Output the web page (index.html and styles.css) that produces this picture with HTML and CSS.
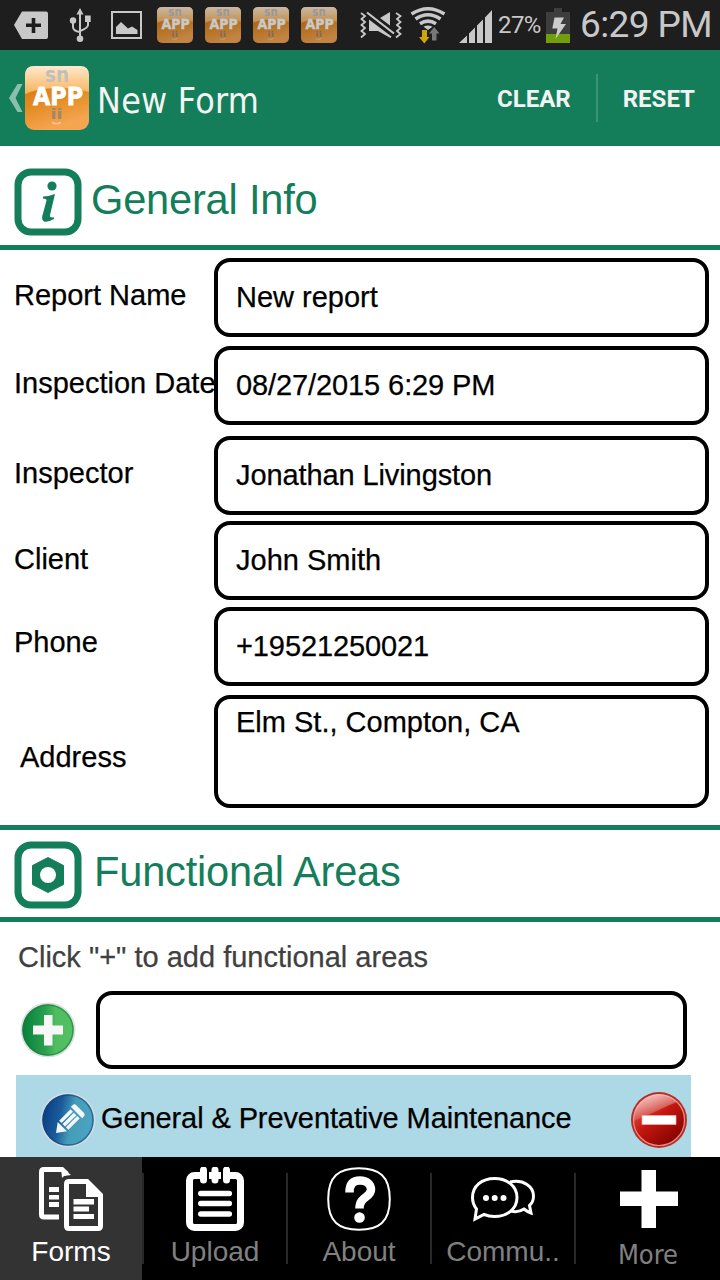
FILE: index.html
```html
<!DOCTYPE html>
<html lang="en">
<head>
<meta charset="utf-8">
<title>New Form</title>
<link rel="stylesheet" href="styles.css">
</head>
<body>
<svg class="defs" width="0" height="0">
  <defs>
    <linearGradient id="orange" x1="0" y1="0" x2="0.3" y2="1">
      <stop offset="0" stop-color="#f3ac4c"/><stop offset="0.42" stop-color="#dc8218"/><stop offset="0.6" stop-color="#e38b20"/><stop offset="1" stop-color="#f5a450"/>
    </linearGradient>
    <linearGradient id="gloss" x1="0" y1="0" x2="0" y2="1">
      <stop offset="0" stop-color="#ffe9cf"/><stop offset="1" stop-color="#f8b257"/>
    </linearGradient>
    <linearGradient id="green" x1="0" y1="0" x2="1" y2="0">
      <stop offset="0" stop-color="#067f3c"/><stop offset="0.45" stop-color="#2ba04e"/><stop offset="0.65" stop-color="#4fbd60"/><stop offset="1" stop-color="#55c064"/>
    </linearGradient>
    <linearGradient id="blue" x1="0" y1="0" x2="1" y2="0.2">
      <stop offset="0" stop-color="#04377c"/><stop offset="0.4" stop-color="#1b5b9c"/><stop offset="0.65" stop-color="#449cb8"/><stop offset="1" stop-color="#4aa3c0"/>
    </linearGradient>
    <linearGradient id="red" x1="0" y1="0" x2="0.8" y2="1">
      <stop offset="0.1" stop-color="#e25a50"/><stop offset="0.5" stop-color="#c4170f"/><stop offset="0.9" stop-color="#8d0500"/>
    </linearGradient>
    <linearGradient id="shine" x1="0.1" y1="0" x2="0.5" y2="1">
      <stop offset="0" stop-color="#fff" stop-opacity="0.7"/><stop offset="1" stop-color="#fff" stop-opacity="0.02"/>
    </linearGradient>
    <symbol id="snapp" viewBox="0 0 64 64">
      <rect width="64" height="64" rx="9" fill="url(#orange)"/>
      <path d="M0 28V9Q0 0 9 0H55Q64 0 64 9V26Q52 22 32 22T0 28Z" fill="url(#gloss)"/>
      <g font-family="DejaVu Sans" font-weight="bold">
        <text x="20" y="16" font-size="21" textLength="24" lengthAdjust="spacingAndGlyphs" fill="#c2bfbb">sn</text>
        <text x="8" y="38.500" font-size="25" textLength="50" lengthAdjust="spacingAndGlyphs" fill="#fff" stroke="#fff" stroke-width=".8">APP</text>
        <text x="25.500" y="53" font-size="14" textLength="12" lengthAdjust="spacingAndGlyphs" fill="#9b8873">ii</text>
      </g>
      <path d="M27 56.500Q31.500 59 36 56.500" fill="none" stroke="#ffc590" stroke-width="1.500"/>
    </symbol>
  </defs>
</svg>
<div class="screen">
  <div class="status">
    <div class="status-left">
      <svg width="36" height="50" viewBox="13 0 36 50"><path d="M14 25 22 11.500H46Q48 11.500 48 13.500V37Q48 39 46 39H22Z" fill="#c8c8c8"/><path d="M33.500 18V33M26 25.300H41" stroke="#1e1e1e" stroke-width="3.600"/></svg>
      <svg width="24" height="50" viewBox="67 0 24 50"><g fill="none" stroke="#c8c8c8" stroke-width="2"><path d="M79 13V38M79 32Q72 31 72 27V21M79 31Q87 28 87 25V18"/></g><path d="M79 8 82.500 14.500H75.500ZM84 15.500H89.700V22H84Z" fill="#c8c8c8"/><circle cx="72" cy="20.500" r="3.200" fill="#c8c8c8"/><circle cx="79" cy="38.700" r="3.300" fill="#c8c8c8"/></svg>
      <svg width="32" height="50" viewBox="111 0 32 50"><path d="M112 12H141V38H112Z" fill="none" stroke="#c8c8c8" stroke-width="2"/><path d="M116 34V27L121 22 128 28.500 132 26.500 137.500 30V34Z" fill="#c8c8c8"/></svg>
      <div class="app-icons">
        <svg width="36" height="36"><use href="#snapp"/></svg>
        <svg width="36" height="36"><use href="#snapp"/></svg>
        <svg width="36" height="36"><use href="#snapp"/></svg>
        <svg width="36" height="36"><use href="#snapp"/></svg>
      </div>
    </div>
    <div class="status-right">
      <svg class="mute" width="44" height="50" viewBox="359 0 44 50"><g fill="none" stroke="#c8c8c8" stroke-width="1.800"><path d="M361 13 365 16 361.500 19 365 22 361.500 25 365 28 361.500 31 365 34 361 37.500M396 13 400.500 16 397 19 400.500 22 397 25 400.500 28 397 31 400.500 34 396 37.500"/><path d="M367 12.500 394 33.500" stroke-width="2.200"/></g><path d="M380 18 390 12V25.500ZM369 19.500 391.500 36.500 390.500 38 378 31H369Z" fill="#c8c8c8"/></svg>
      <svg class="wifi" width="38" height="50" viewBox="409 0 38 50"><g fill="none" stroke="#c8c8c8" stroke-width="3.600"><path d="M411.500 14Q428 3.500 444.500 14M415.500 19Q428 10.500 440.500 19M420 23.800Q428 18.500 436 23.800"/></g><path d="M423.500 26.800Q428 24 432.500 26.800L428 30Z" fill="#c8c8c8"/><path d="M422 30H427V37H429.500L424.300 43.500 419 37H422Z" fill="#d0a40b"/><path d="M432 40.500V33.500H429L434.200 27 439.500 33.500H436.500V40.500Z" fill="#777"/></svg>
      <svg class="signal" width="34" height="50" viewBox="459 0 34 50"><path d="M459 43 467 35.500V43ZM469 43V33.500L475 27.500V43ZM477 43V25.500L483 19.500V43ZM485 43V17.500L492 10V43Z" fill="#c8c8c8"/></svg>
      <span class="percent">27%</span>
      <svg class="battery" width="24" height="50" viewBox="546 0 24 50"><path d="M546 12H554V8H562V12H570V34H546Z" fill="#3d3d3d"/><path d="M546 34H570V43H546Z" fill="#719f0a"/><path d="M554.500 17.500H564L560.500 24H566L555.500 39 557.500 28.500H552.300Z" fill="#ccc"/></svg>
      <span class="time">6:29 PM</span>
    </div>
  </div>

  <header class="actionbar">
    <svg class="back" width="14" height="28" viewBox="0 0 14 28"><path d="M8.500 0H13.500L6.500 14 13.500 28H8.500L0 14Z" fill="#8abfac"/></svg>
    <svg class="logo" width="64" height="64"><use href="#snapp"/></svg>
    <h1>New Form</h1>
    <div class="actions"><button>CLEAR</button><i></i><button>RESET</button></div>
  </header>

  <main>
    <section class="head info">
      <svg width="68" height="68" viewBox="0 0 68 68"><rect x="4" y="4" width="60" height="60" rx="13" fill="none" stroke="#147e5a" stroke-width="7"/><circle cx="38" cy="18" r="4.600" fill="#147e5a"/><path d="M29 28.500Q34 28.500 41 26L35.800 48Q35.800 50 40 49.300V51Q34 54.500 30 53.500Q27.500 52 28.300 48L32.500 32.500Q32.500 30.500 29 30.500Z" fill="#147e5a"/></svg>
      <h2>General Info</h2>
    </section>
    <section class="form">
      <div class="row r1"><label>Report Name</label><div class="input">New report</div></div>
      <div class="row r2"><label>Inspection Date</label><div class="input">08/27/2015 6:29 PM</div></div>
      <div class="row r3"><label>Inspector</label><div class="input">Jonathan Livingston</div></div>
      <div class="row r4"><label>Client</label><div class="input">John Smith</div></div>
      <div class="row r5"><label>Phone</label><div class="input">+19521250021</div></div>
      <div class="row r6"><label>Address</label><div class="input area">Elm St., Compton, CA</div></div>
    </section>
    <section class="head areas">
      <svg width="68" height="68" viewBox="0 0 68 68"><rect x="4" y="4" width="60" height="60" rx="13" fill="none" stroke="#147e5a" stroke-width="7"/><path d="M34 16.500 49.500 24.500V43.500L34 51.500 18.500 43.500V24.500Z" fill="#147e5a" stroke="#147e5a" stroke-linejoin="round"/><circle cx="34" cy="34" r="8" fill="#fff"/></svg>
      <h2>Functional Areas</h2>
    </section>
    <p class="hint">Click "+" to add functional areas</p>
    <div class="add">
      <svg width="56" height="56" viewBox="0 0 56 56"><circle cx="28" cy="28" r="27.500" fill="#dcdfdd"/><circle cx="28" cy="28" r="25.700" fill="url(#green)"/><circle cx="28" cy="28" r="25" fill="none" stroke="#157b3b" stroke-opacity=".6" stroke-width="1.500"/><path d="M24 13H32.500V23.500H43V32.500H32.500V43.500H24V32.500H13V23.500H24Z" fill="#f7f7f7"/></svg>
      <div class="input"></div>
    </div>
    <div class="item">
      <svg width="56" height="56" viewBox="0 0 56 56"><circle cx="28" cy="28" r="27.500" fill="#d4dae2"/><circle cx="28" cy="28" r="25.700" fill="url(#blue)"/><circle cx="28" cy="28" r="25" fill="none" stroke="#104274" stroke-opacity=".6" stroke-width="1.500"/><g transform="translate(16 41) rotate(-45)" fill="#f4f7fa"><path d="M0 0 9-6.500V6.500ZM11-6.500H27V-3H11ZM11-1.800H27V1.800H11ZM11 3H27V6.500H11ZM29-8H31Q34-8 34-5V5Q34 8 31 8H29Z"/></g></svg>
      <span>General &amp; Preventative Maintenance</span>
      <svg class="remove" width="56" height="56" viewBox="0 0 56 56"><circle cx="28" cy="28" r="28" fill="#b92c26"/><circle cx="28" cy="28" r="25.500" fill="url(#red)" stroke="#e99088" stroke-width="1.200"/><path d="M3 29A25 25 0 0 1 46 10Q38 13 30 17T3 29Z" fill="url(#shine)"/><path d="M11 23.500H45V32.500H11Z" fill="#fff" stroke="#efb0aa" stroke-width=".7"/></svg>
    </div>
  </main>

  <nav>
    <div class="tab active">
      <svg width="64" height="64" viewBox="0 0 64 64"><path d="M20 50H5Q2.500 50 2.500 47.500V5Q2.500 2.500 5 2.500H23L28 7" fill="none" stroke="#fff" stroke-width="5"/><path d="M22 0 32 8 25 9 23 11ZM10 20H20V25H10ZM10 28H20V32.500H10ZM10 35H20V40H10Z" fill="#fff"/><path d="M29 14.500H48L61.500 28V59Q61.500 61.500 59 61.500H30Q27.500 61.500 27.500 59V17Q27.500 14.500 30 14.500" fill="none" stroke="#fff" stroke-width="5"/><path d="M47 13V30H63ZM34.500 32H55V37.500H34.500ZM34.500 39.500H50V44.500H34.500ZM34.500 47H55V52H34.500Z" fill="#fff"/></svg>
      <span>Forms</span>
    </div>
    <div class="tab">
      <svg width="64" height="64" viewBox="0 0 64 64"><rect x="6.500" y="8.500" width="51" height="52" rx="5" fill="none" stroke="#fff" stroke-width="7"/><path d="M26.200 4V13M37.800 4V13" stroke="#000" stroke-width="4.500"/><g fill="none" stroke="#fff" stroke-linecap="round"><path d="M26 8.500H38" stroke-width="7" stroke-linecap="butt"/><path d="M20.500 3V13M32 3V13M43.500 3V13" stroke-width="7"/><path d="M15 26.500H43.500M15 36.500H43.500M15 47H43.500" stroke-width="5.500"  transform="translate(2.800)"/></g></svg>
      <span>Upload</span>
    </div>
    <div class="tab">
      <svg width="64" height="64" viewBox="0 0 64 64"><path d="M32 1.200C52 1.200 62.800 9 62.800 32S52 62.800 32 62.800 1.200 55 1.200 32 12 1.200 32 1.200Z" fill="none" stroke="#fff" stroke-width="2"/><path d="M22.500 25.500C22.500 17 26 13.500 33 13.500S44 17.500 44 22.500C44 31 32.500 29 32.500 41.500" fill="none" stroke="#fff" stroke-width="8.500"/><circle cx="32.500" cy="50.500" r="5.300" fill="#fff"/></svg>
      <span>About</span>
    </div>
    <div class="tab">
      <svg width="64" height="64" viewBox="0 0 64 64"><g fill="none" stroke="#fff" stroke-width="3"><path d="M39 15C53 12 62.500 20 62.500 29Q62.500 35 58.500 38.500L60 46Q56 44.500 53 42Q47 46 40 44"/><path d="M23.500 11.500C36 11.500 46 19 46 30.500S36 49.500 23.500 49.500Q18 49.500 13 47.500L4 52 5.500 42Q1.500 37 1.500 30.500C1.500 19 11 11.500 23.500 11.500Z" fill="#000"/></g><g fill="#fff"><circle cx="15" cy="31" r="3"/><circle cx="23.700" cy="31" r="3"/><circle cx="32.500" cy="31" r="3"/></g></svg>
      <span>Commu..</span>
    </div>
    <div class="tab more">
      <svg width="64" height="64" viewBox="0 0 64 64"><path d="M25.500 3H40V24.500H62V39H40V61H25.500V39H4V24.500H25.500Z" fill="#fff"/></svg>
      <span>More</span>
    </div>
  </nav>
</div>
</body>
</html>
```

FILE: styles.css
```css
* { box-sizing: border-box; }
body { margin: 0; background: #fff; }
svg { display: block; flex: none; }
.defs { position: absolute; }
.screen {
  width: 720px; height: 1280px; overflow: hidden;
  display: flex; flex-direction: column;
  font-family: "Liberation Sans", Arial, sans-serif;
  color: #000; font-size: 29px;
}

.status {
  height: 50px; flex: none; background: #1e1e1e; color: #c8c8c8;
  display: flex; justify-content: space-between;
  font-family: Roboto, sans-serif; white-space: nowrap;
}
.status-left { display: flex; gap: 19px; padding-left: 13px; }
.app-icons { display: flex; gap: 12px; padding-top: 7px; margin-left: -5px; opacity: .76; }
.status-right { display: flex; width: 361px; }
.wifi { margin-left: 6px; }
.signal { margin-left: 12px; }
.percent { width: 48px; margin-left: 5px; font-size: 24px; line-height: 51px; letter-spacing: -.6px; }
.time { margin-left: 10px; font-size: 37px; line-height: 49px; letter-spacing: -.6px; }

.actionbar {
  height: 96px; flex: none; background: #147e5a; color: #f3f3f3;
  display: flex; align-items: center; padding-left: 9px;
}
.back { margin-right: 2px; }
h1 { margin: 6px 0 0 8px; font: 35.5px/44px "DejaVu Sans Condensed", "DejaVu Sans", sans-serif; font-stretch: condensed; letter-spacing: .25px; }
.actions { margin-left: auto; display: flex; align-items: center; padding-right: 25px; }
.actions i { width: 2px; height: 48px; background: #3a947a; margin: 0 25px; }
button { border: 0; padding: 2px 0 0; background: none; color: inherit; font: bold 24px/46px Roboto, sans-serif; }

main { height: 1011px; flex: none; }
.head { display: flex; padding-left: 14px; color: #147e5a; border-bottom: 5px solid #147e5a; }
.info { height: 104px; padding-top: 22px; }
.areas { height: 97px; padding-top: 11px; border-top: 5px solid #147e5a; margin-top: 17px; }
h2 { margin: 8px 0 0 9px; font-size: 41.6px; line-height: 48px; font-weight: normal; letter-spacing: -.2px; }
.areas h2 { margin: 7px 0 0 12px; }

.form { padding: 8px 11px 0 14px; display: flex; flex-direction: column; -webkit-text-stroke: .25px #000; }
.row { display: grid; grid-template-columns: 200px 495px; align-items: center; white-space: nowrap; }
.row label { line-height: 34px; margin-top: -5px; }
.r2 { margin-top: 9px; }
.r3 { margin-top: 11px; }
.r4 { margin-top: 6px; }
.r4 label { margin-top: -3px; }
.r5 { margin-top: 7px; }
.r5 label { margin-top: -9px; }
.r6 { margin-top: 9px; }
.r6 label { margin: 11px 0 0 6px; }
.input { height: 79px; border: 4px solid #000; border-radius: 16px; padding-left: 18px; line-height: 71px; background: #fff; }
.r2 .input, .r3 .input, .r5 .input { letter-spacing: -.1px; }
.input.area { height: 113px; line-height: 34px; padding-top: 6px; }

.hint { margin: 18px 0 0 18px; line-height: 34px; color: #404040; -webkit-text-stroke: .25px #404040; }
.add { display: flex; align-items: center; gap: 20px; margin: 17px 33px 0 20px; }
.add .input { flex: 1; height: 78px; }
.item { height: 82px; width: 675px; margin: 6px 0 0 16px; background: #add8e6; display: flex; align-items: center; padding: 7px 4px 0 24px; }
.item span { margin: -4px 0 0 5px; white-space: nowrap; line-height: 34px; letter-spacing: -.1px; -webkit-text-stroke: .25px #000; }
.remove { margin-left: auto; }

nav { height: 123px; flex: none; display: flex; background: #000; color: #808080; font-size: 28px; }
.tab {
  width: 144px; padding: 10px 2px 0 0; flex: none;
  display: flex; flex-direction: column; align-items: center;
  background: linear-gradient(#282828, #282828) right 16px / 2px 91px no-repeat;
}
.tab span { line-height: 32px; margin-top: 5px; white-space: nowrap; }
.tab.active { color: #fff; background: linear-gradient(#282828, #282828) right 16px / 2px 91px no-repeat, linear-gradient(#333, #333) left top / 142px 100% no-repeat; }
.tab.more { background: none; padding-right: 0; }
.tab.more span { font: 27px/32px "DejaVu Sans Condensed", "DejaVu Sans", sans-serif; font-stretch: condensed; margin-top: 8px; }
```
